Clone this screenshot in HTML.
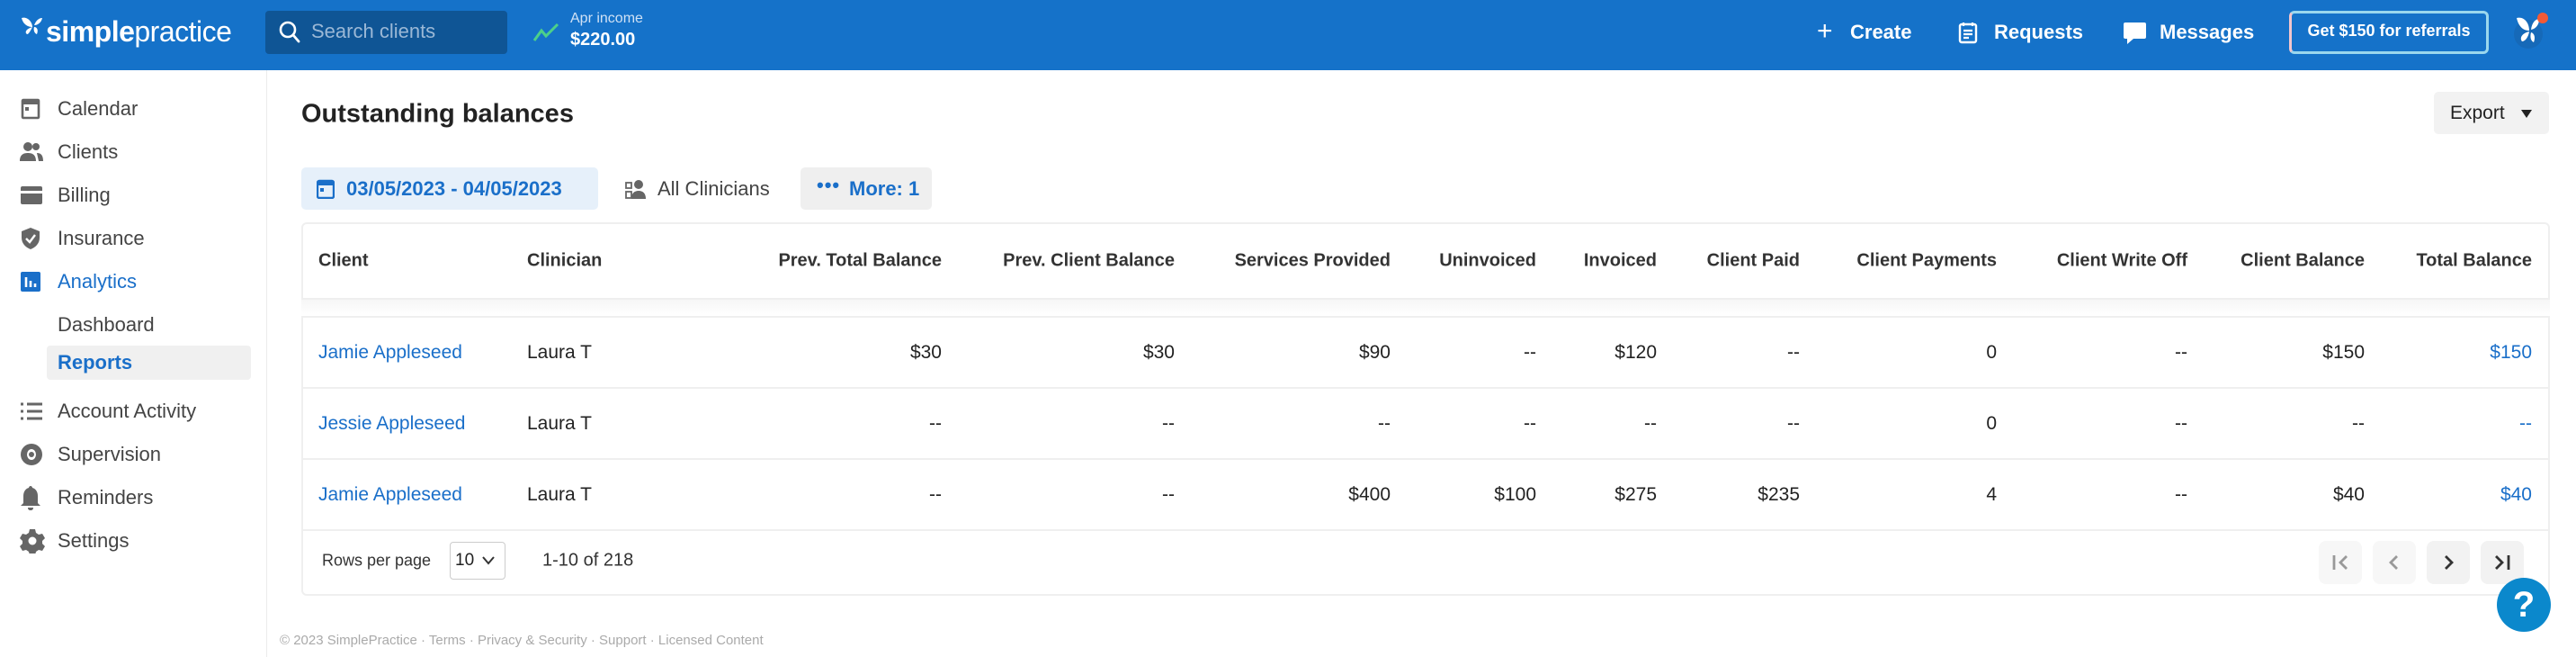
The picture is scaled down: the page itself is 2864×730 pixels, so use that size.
<!DOCTYPE html>
<html><head><meta charset="utf-8"><style>
*{box-sizing:border-box;margin:0;padding:0}
body{width:2864px;height:730px;overflow:hidden;background:#fff;font-family:"Liberation Sans",sans-serif;color:#222;position:relative}
.a{position:absolute;white-space:nowrap}
.top{position:absolute;left:0;top:0;width:2864px;height:78px;background:#1572c9}
.side{position:absolute;left:0;top:78px;width:297px;height:652px;border-right:1px solid #ececec}
.nav{position:absolute;left:64px;font-size:22px;color:#444;transform:translateY(-50%)}
.ic{position:absolute;left:22px;transform:translateY(-50%)}
.th{font-size:20px;font-weight:bold;color:#333;top:290px;transform:translateY(-50%)}
.td{font-size:21px;color:#222;transform:translateY(-50%)}
.r{text-align:right}
.lnk{color:#1a6fc9}
.hl{position:absolute;left:335px;width:2500px;height:2px;background:#efefef}
.pb{position:absolute;top:601px;width:48px;height:48px;border-radius:8px;background:#f2f2f2}
</style></head><body>
<div class="top"></div>
<svg class="a" style="left:22px;top:18px" width="30" height="24" viewBox="0 0 30 24"><path d="M2 2 C8 0 14 6 14 12 C10 12 4 10 2 2Z M14 12 C12 16 10 20 8 20 C5 18 7 14 14 12Z" fill="#fff"/><path d="M16 10 C18 5 21 2 25 2 C24 7 20 10 16 10Z M16 12 C19 12 21 15 19 20 C16 19 15 15 16 12Z" fill="#fff"/></svg>
<div class="a" style="left:51px;top:17px;font-size:32px;color:#fff;letter-spacing:-0.5px"><b>simple</b>practice</div>
<div class="a" style="left:295px;top:12px;width:269px;height:48px;background:#0f5595;border-radius:4px"></div>
<svg class="a" style="left:309px;top:22px" width="26" height="28" viewBox="0 0 26 28"><circle cx="11" cy="11" r="8" fill="none" stroke="#fff" stroke-width="2.6"/><path d="M17 17 L23 24" stroke="#fff" stroke-width="2.8" stroke-linecap="round"/></svg>
<div class="a" style="left:346px;top:22px;font-size:22px;color:#9bb8d6">Search clients</div>
<svg class="a" style="left:592px;top:25px" width="32" height="22" viewBox="0 0 32 22"><path d="M2 20 L10 9 L15 15 L28 2" fill="none" stroke="#4cd08a" stroke-width="3"/></svg>
<div class="a" style="left:634px;top:12px;font-size:16px;color:#cfe1f5">Apr income</div>
<div class="a" style="left:634px;top:33px;font-size:20px;font-weight:bold;color:#fff">$220.00</div>
<div class="a" style="left:2020px;top:20px;font-size:30px;color:#fff;line-height:30px">+</div>
<div class="a" style="left:2057px;top:23px;font-size:22px;font-weight:bold;color:#fff">Create</div>
<svg class="a" style="left:2177px;top:23px" width="22" height="26" viewBox="0 0 22 26"><rect x="2" y="4" width="18" height="20" rx="2" fill="none" stroke="#fff" stroke-width="2.4"/><path d="M6 2v4M16 2v4M6 11h10M6 15h10M6 19h6" stroke="#fff" stroke-width="2.2"/></svg>
<div class="a" style="left:2217px;top:23px;font-size:22px;font-weight:bold;color:#fff">Requests</div>
<svg class="a" style="left:2360px;top:23px" width="28" height="28" viewBox="0 0 28 28"><path d="M3 2h21a2 2 0 0 1 2 2v14a2 2 0 0 1-2 2H12l-7 6v-6H3a2 2 0 0 1-2-2V4a2 2 0 0 1 2-2z" fill="#fff"/></svg>
<div class="a" style="left:2401px;top:23px;font-size:22px;font-weight:bold;color:#fff">Messages</div>
<div class="a" style="left:2545px;top:12px;width:222px;height:48px;border:3px solid #9ad7ee;border-left-color:#f2c5cc;border-radius:6px"></div>
<div class="a" style="left:2545px;top:24px;width:222px;text-align:center;font-size:18px;font-weight:bold;color:#fff">Get $150 for referrals</div>
<svg class="a" style="left:2793px;top:12px" width="44" height="44" viewBox="0 0 44 44"><circle cx="18" cy="26" r="16" fill="#1669b8"/><path d="M5 8 C13 6 19 13 19 22 C12 22 7 17 5 8Z M19 23 C18 30 14 34 11 34 C8 30 11 25 19 23Z M21 21 C22 13 26 9 30 9 C30 16 26 20 21 21Z M21 24 C25 25 26 30 24 35 C20 33 20 28 21 24Z" fill="#fff"/><circle cx="34" cy="8" r="6" fill="#f25a36"/></svg>

<div class="side"></div>
<svg class="ic" style="top:121px" width="24" height="24" viewBox="0 0 24 24"><rect x="3" y="2" width="18" height="20" rx="1" fill="none" stroke="#666" stroke-width="2.6"/><rect x="3" y="2" width="18" height="5" fill="#666"/><rect x="6" y="10" width="4" height="4" fill="#666"/></svg>
<div class="nav" style="top:121px">Calendar</div>
<svg class="ic" style="top:169px" width="26" height="24" viewBox="0 0 26 24"><circle cx="9" cy="6" r="5" fill="#666"/><circle cx="18" cy="6" r="4" fill="#666"/><path d="M0 22c0-7 4-9 9-9s9 2 9 9z M19 13c4 0 7 2 7 9h-5z" fill="#666"/></svg>
<div class="nav" style="top:169px">Clients</div>
<svg class="ic" style="top:217px" width="26" height="22" viewBox="0 0 26 22"><rect x="1" y="1" width="24" height="20" rx="2" fill="#666"/><rect x="1" y="6" width="24" height="3" fill="#fff"/></svg>
<div class="nav" style="top:217px">Billing</div>
<svg class="ic" style="top:265px" width="24" height="26" viewBox="0 0 24 26"><path d="M12 1 L22 5 V12 C22 19 17 23 12 25 C7 23 2 19 2 12 V5Z" fill="#666"/><path d="M7 13l4 4 6-8" fill="none" stroke="#fff" stroke-width="2.4"/></svg>
<div class="nav" style="top:265px">Insurance</div>
<svg class="ic" style="top:313px" width="24" height="24" viewBox="0 0 24 24"><rect x="1" y="1" width="22" height="22" rx="2" fill="#1a6fc9"/><path d="M7 7v11M12 11v7M17 14v4" stroke="#fff" stroke-width="2.6"/></svg>
<div class="nav" style="top:313px;color:#1a6fc9">Analytics</div>
<div class="nav" style="top:361px">Dashboard</div>
<div class="a" style="left:52px;top:384px;width:227px;height:38px;background:#f0f0f0;border-radius:4px"></div>
<div class="nav" style="top:403px;color:#1a6fc9;font-weight:bold">Reports</div>
<svg class="ic" style="top:457px" width="26" height="22" viewBox="0 0 26 22"><path d="M1 3h3M1 11h3M1 19h3M8 3h17M8 11h17M8 19h17" stroke="#666" stroke-width="3"/></svg>
<div class="nav" style="top:457px">Account Activity</div>
<svg class="ic" style="top:505px" width="26" height="26" viewBox="0 0 26 26"><circle cx="13" cy="13" r="12" fill="#666"/><ellipse cx="13" cy="13" rx="5" ry="6" fill="#fff"/><circle cx="13" cy="13" r="3" fill="#666"/></svg>
<div class="nav" style="top:505px">Supervision</div>
<svg class="ic" style="top:553px" width="24" height="28" viewBox="0 0 24 28"><path d="M12 1c1 0 2 1 2 2 4 1 6 5 6 9v8l3 3H1l3-3v-8c0-4 2-8 6-9 0-1 1-2 2-2z M9 25h6c0 2-1 3-3 3s-3-1-3-3z" fill="#666"/></svg>
<div class="nav" style="top:553px">Reminders</div>
<svg class="ic" style="top:601px" width="28" height="28" viewBox="0 0 28 28"><path d="M11 1h6l1 4 3 2 4-1 3 5-3 3v3l3 3-3 5-4-1-3 2-1 4h-6l-1-4-3-2-4 1-3-5 3-3v-3L0 11l3-5 4 1 3-2z" fill="#666"/><circle cx="14" cy="14" r="4.5" fill="#fff"/></svg>
<div class="nav" style="top:601px">Settings</div>

<div class="a" style="left:335px;top:127px;transform:translateY(-50%);font-size:29px;font-weight:bold;color:#222">Outstanding balances</div>
<div class="a" style="left:2706px;top:102px;width:128px;height:47px;background:#f2f2f2;border-radius:5px"></div>
<div class="a" style="left:2724px;top:114px;font-size:21px;color:#222">Export</div>
<div class="a" style="left:2803px;top:122px;width:0;height:0;border-left:6px solid transparent;border-right:6px solid transparent;border-top:9px solid #222"></div>

<div class="a" style="left:335px;top:186px;width:330px;height:47px;background:#e6f0fa;border-radius:5px"></div>
<svg class="a" style="left:352px;top:199px" width="20" height="22" viewBox="0 0 20 22"><rect x="1" y="2" width="18" height="19" rx="2" fill="none" stroke="#1a6fc9" stroke-width="2.4"/><rect x="1" y="2" width="18" height="5" fill="#1a6fc9"/><rect x="4" y="10" width="4" height="4" fill="#1a6fc9"/></svg>
<div class="a" style="left:385px;top:197px;font-size:22px;font-weight:bold;color:#1a6fc9">03/05/2023 - 04/05/2023</div>
<svg class="a" style="left:695px;top:199px" width="24" height="22" viewBox="0 0 24 22"><circle cx="15" cy="6" r="5" fill="#666"/><path d="M7 22c0-6 3-9 8-9s8 3 8 9z" fill="#666"/><rect x="1" y="4" width="6" height="6" fill="none" stroke="#666" stroke-width="1.8"/><rect x="1" y="14" width="6" height="7" fill="none" stroke="#666" stroke-width="1.8"/></svg>
<div class="a" style="left:731px;top:197px;font-size:22px;color:#444">All Clinicians</div>
<div class="a" style="left:890px;top:186px;width:146px;height:47px;background:#efefef;border-radius:5px"></div>
<div class="a" style="left:908px;top:193px;font-size:22px;font-weight:bold;color:#1a6fc9;letter-spacing:1px">•••</div>
<div class="a" style="left:944px;top:197px;font-size:22px;font-weight:bold;color:#1a6fc9">More: 1</div>

<div class="a" style="left:335px;top:247px;width:2500px;height:415px;border:2px solid #efefef;border-radius:6px"></div>
<div class="hl" style="top:331px"></div>
<div class="a" style="left:335px;top:333px;width:2500px;height:18px;background:linear-gradient(#f6f6f6,#fff)"></div>
<div class="hl" style="top:351px"></div>
<div class="hl" style="top:430px"></div>
<div class="hl" style="top:509px"></div>
<div class="hl" style="top:588px"></div>

<div class="a th" style="left:354px">Client</div>
<div class="a th" style="left:586px">Clinician</div>
<div class="a th r" style="right:1817px">Prev. Total Balance</div>
<div class="a th r" style="right:1558px">Prev. Client Balance</div>
<div class="a th r" style="right:1318px">Services Provided</div>
<div class="a th r" style="right:1156px">Uninvoiced</div>
<div class="a th r" style="right:1022px">Invoiced</div>
<div class="a th r" style="right:863px">Client Paid</div>
<div class="a th r" style="right:644px">Client Payments</div>
<div class="a th r" style="right:432px">Client Write Off</div>
<div class="a th r" style="right:235px">Client Balance</div>
<div class="a th r" style="right:49px">Total Balance</div>

<div class="a td lnk" style="left:354px;top:392px">Jamie Appleseed</div>
<div class="a td" style="left:586px;top:392px">Laura T</div>
<div class="a td" style="right:1817px;top:392px">$30</div>
<div class="a td" style="right:1558px;top:392px">$30</div>
<div class="a td" style="right:1318px;top:392px">$90</div>
<div class="a td" style="right:1156px;top:392px">--</div>
<div class="a td" style="right:1022px;top:392px">$120</div>
<div class="a td" style="right:863px;top:392px">--</div>
<div class="a td" style="right:644px;top:392px">0</div>
<div class="a td" style="right:432px;top:392px">--</div>
<div class="a td" style="right:235px;top:392px">$150</div>
<div class="a td lnk" style="right:49px;top:392px">$150</div>
<div class="a td lnk" style="left:354px;top:471px">Jessie Appleseed</div>
<div class="a td" style="left:586px;top:471px">Laura T</div>
<div class="a td" style="right:1817px;top:471px">--</div>
<div class="a td" style="right:1558px;top:471px">--</div>
<div class="a td" style="right:1318px;top:471px">--</div>
<div class="a td" style="right:1156px;top:471px">--</div>
<div class="a td" style="right:1022px;top:471px">--</div>
<div class="a td" style="right:863px;top:471px">--</div>
<div class="a td" style="right:644px;top:471px">0</div>
<div class="a td" style="right:432px;top:471px">--</div>
<div class="a td" style="right:235px;top:471px">--</div>
<div class="a td lnk" style="right:49px;top:471px">--</div>
<div class="a td lnk" style="left:354px;top:550px">Jamie Appleseed</div>
<div class="a td" style="left:586px;top:550px">Laura T</div>
<div class="a td" style="right:1817px;top:550px">--</div>
<div class="a td" style="right:1558px;top:550px">--</div>
<div class="a td" style="right:1318px;top:550px">$400</div>
<div class="a td" style="right:1156px;top:550px">$100</div>
<div class="a td" style="right:1022px;top:550px">$275</div>
<div class="a td" style="right:863px;top:550px">$235</div>
<div class="a td" style="right:644px;top:550px">4</div>
<div class="a td" style="right:432px;top:550px">--</div>
<div class="a td" style="right:235px;top:550px">$40</div>
<div class="a td lnk" style="right:49px;top:550px">$40</div>

<div class="a" style="left:358px;top:623px;transform:translateY(-50%);font-size:18px;color:#333">Rows per page</div>
<div class="a" style="left:500px;top:602px;width:62px;height:42px;border:1px solid #ccc;border-radius:4px"></div>
<div class="a" style="left:506px;top:612px;font-size:19px;color:#222">10</div>
<svg class="a" style="left:535px;top:617px" width="16" height="12" viewBox="0 0 16 12"><path d="M2 2l6 7 6-7" fill="none" stroke="#333" stroke-width="2"/></svg>
<div class="a" style="left:603px;top:623px;transform:translateY(-50%);font-size:20px;color:#333">1-10 of 218</div>
<div class="pb" style="left:2578px;background:#f7f7f7"></div>
<div class="pb" style="left:2638px;background:#f7f7f7"></div>
<div class="pb" style="left:2698px"></div>
<div class="pb" style="left:2758px"></div>
<svg class="a" style="left:2590px;top:613px" width="24" height="24" viewBox="0 0 24 24"><path d="M5 4v16M19 5l-7 7 7 7" fill="none" stroke="#999" stroke-width="2.8"/></svg>
<svg class="a" style="left:2650px;top:613px" width="24" height="24" viewBox="0 0 24 24"><path d="M15 5l-7 7 7 7" fill="none" stroke="#999" stroke-width="2.8"/></svg>
<svg class="a" style="left:2710px;top:613px" width="24" height="24" viewBox="0 0 24 24"><path d="M9 5l7 7-7 7" fill="none" stroke="#333" stroke-width="2.8"/></svg>
<svg class="a" style="left:2770px;top:613px" width="24" height="24" viewBox="0 0 24 24"><path d="M5 5l7 7-7 7M19 4v16" fill="none" stroke="#333" stroke-width="2.8"/></svg>
<div class="a" style="left:2776px;top:642px;width:60px;height:60px;border-radius:50%;background:#0b88cc;color:#fff;font-size:40px;font-weight:bold;text-align:center;line-height:60px">?</div>

<div class="a" style="left:311px;top:703px;font-size:15px;color:#aaa">© 2023 SimplePractice · Terms · Privacy &amp; Security · Support · Licensed Content</div>
</body></html>
